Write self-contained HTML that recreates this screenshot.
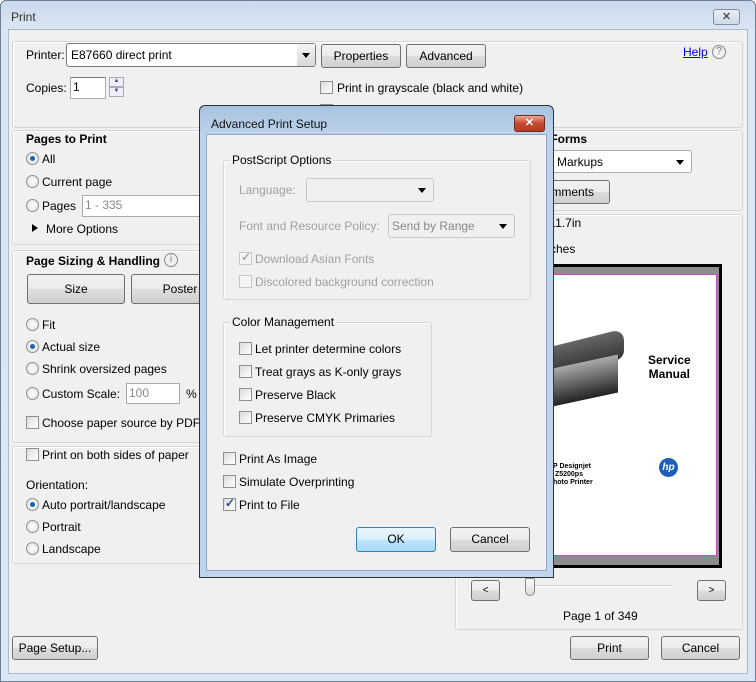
<!DOCTYPE html>
<html><head><style>
*{box-sizing:border-box;margin:0;padding:0}
body{width:756px;height:682px;overflow:hidden;background:#fff;font-family:"Liberation Sans",sans-serif;font-size:12px;color:#000;position:relative}
.a{position:absolute}
.win{left:0;top:0;width:756px;height:682px;background:linear-gradient(#c9d9ec,#dbe6f3 30px,#dce7f3);border:1px solid #6d7f95;border-radius:6px 6px 0 0}
.client{left:8px;top:29px;width:740px;height:645px;background:#f0f0f0;border:1px solid #a9b9cc}
.panel{position:absolute;border:1px solid #d6d6d6;border-radius:3px;box-shadow:inset 1px 1px 0 #fff}
.btn{position:absolute;border:1px solid #707070;border-radius:3px;background:linear-gradient(#f2f2f2,#ebebeb 50%,#dddddd 51%,#cfcfcf);text-align:center;font-size:12px}
.rb{position:absolute;width:13px;height:13px;border-radius:50%;border:1px solid #8e8f8f;background:radial-gradient(#fff,#dcdcdc)}
.rb.on::after{content:"";position:absolute;left:3px;top:3px;width:5px;height:5px;border-radius:50%;background:#1b65b0}
.cb{position:absolute;width:13px;height:13px;border:1px solid #8e8f8f;background:linear-gradient(135deg,#dcdcdc,#fff)}
.cb.on::after{content:"✓";position:absolute;left:1px;top:-3px;font-size:12px;color:#2a4e93;font-weight:bold}
.cb.dis{border-color:#c8c8c8;background:#f4f4f4}
.cb.dis.on::after{color:#aaa}
.t{position:absolute;white-space:nowrap}
.b{font-weight:bold}
.g{color:#a0a0a0}
.inp{position:absolute;background:#fff;border:1px solid #abadb3;border-top-color:#7a7a7a}
.dd{position:absolute;border:1px solid #acacac;border-radius:3px;background:#fff}
.dd::after{content:"";position:absolute;right:7px;top:50%;margin-top:-2px;border:4px solid transparent;border-top:5px solid #000;border-bottom:0}
</style></head><body>
<div class="a win"></div>
<div class="t" style="left:11px;top:10px;color:#333;font-size:12px">Print</div>
<div class="a" style="left:713px;top:9px;width:27px;height:16px;border:1px solid #7d8fa5;border-radius:3px;background:linear-gradient(#e6edf5,#cfdbe9);text-align:center;font-size:11px;line-height:14px;color:#555;font-weight:bold">✕</div>
<div class="a client"></div>

<div class="panel" style="left:12px;top:41px;width:731px;height:87px"></div>
<div class="t" style="left:26px;top:48px">Printer:</div>
<div class="dd" style="left:66px;top:43px;width:250px;height:24px;border-color:#7a7a7a"></div>
<div class="t" style="left:71px;top:48px">E87660 direct print</div>
<div class="a" style="left:297px;top:44px;width:18px;height:22px;background:linear-gradient(#f4f4f4,#d8d8d8)"></div>
<div class="a" style="left:302px;top:53px;border:4px solid transparent;border-top:5px solid #000"></div>
<div class="btn" style="left:321px;top:44px;width:80px;height:24px;line-height:22px">Properties</div>
<div class="btn" style="left:406px;top:44px;width:80px;height:24px;line-height:22px">Advanced</div>
<div class="t" style="left:683px;top:45px;color:#0000ee;text-decoration:underline">Help</div>
<div class="a" style="left:712px;top:45px;width:14px;height:14px;border:1px solid #888;border-radius:50%;font-size:10px;line-height:12px;text-align:center;color:#777">?</div>
<div class="t" style="left:26px;top:81px">Copies:</div>
<div class="inp" style="left:70px;top:77px;width:36px;height:22px"></div>
<div class="t" style="left:73px;top:80px">1</div>
<div class="a" style="left:109px;top:77px;width:15px;height:10px;border:1px solid #aaa;background:#eef;font-size:6px;text-align:center;color:#446">▲</div>
<div class="a" style="left:109px;top:87px;width:15px;height:10px;border:1px solid #aaa;background:#eef;font-size:6px;text-align:center;color:#446">▼</div>
<div class="cb" style="left:320px;top:81px"></div>
<div class="t" style="left:337px;top:81px">Print in grayscale (black and white)</div>
<div class="cb" style="left:320px;top:104px"></div>

<div class="panel" style="left:12px;top:130px;width:440px;height:115px"></div>
<div class="t b" style="left:26px;top:132px">Pages to Print</div>
<div class="rb on" style="left:26px;top:152px"></div><div class="t" style="left:42px;top:152px">All</div>
<div class="rb" style="left:26px;top:175px"></div><div class="t" style="left:42px;top:175px">Current page</div>
<div class="rb" style="left:26px;top:199px"></div><div class="t" style="left:42px;top:199px">Pages</div>
<div class="inp" style="left:82px;top:195px;width:130px;height:22px;border-color:#aaa"></div>
<div class="t g" style="left:85px;top:198px;color:#888">1 - 335</div>
<div class="a" style="left:32px;top:224px;border:4px solid transparent;border-left:6px solid #000;border-right:0"></div>
<div class="t" style="left:46px;top:222px">More Options</div>

<div class="panel" style="left:12px;top:250px;width:440px;height:193px"></div>
<div class="t b" style="left:26px;top:254px">Page Sizing &amp; Handling</div>
<div class="a" style="left:164px;top:253px;width:14px;height:14px;border:1px solid #888;border-radius:50%;font-size:10px;line-height:12px;text-align:center;color:#777">i</div>
<div class="btn" style="left:27px;top:274px;width:98px;height:30px;line-height:28px">Size</div>
<div class="btn" style="left:131px;top:274px;width:98px;height:30px;line-height:28px">Poster</div>
<div class="rb" style="left:26px;top:318px"></div><div class="t" style="left:42px;top:318px">Fit</div>
<div class="rb on" style="left:26px;top:340px"></div><div class="t" style="left:42px;top:340px">Actual size</div>
<div class="rb" style="left:26px;top:362px"></div><div class="t" style="left:42px;top:362px">Shrink oversized pages</div>
<div class="rb" style="left:26px;top:387px"></div><div class="t" style="left:42px;top:387px">Custom Scale:</div>
<div class="inp" style="left:126px;top:383px;width:54px;height:21px;border-color:#aaa"></div>
<div class="t" style="left:129px;top:386px;color:#888">100</div>
<div class="t" style="left:186px;top:387px">%</div>
<div class="cb" style="left:26px;top:416px"></div><div class="t" style="left:42px;top:416px">Choose paper source by PDF page size</div>

<div class="panel" style="left:12px;top:446px;width:440px;height:118px"></div>
<div class="cb" style="left:26px;top:448px"></div><div class="t" style="left:42px;top:448px">Print on both sides of paper</div>
<div class="t" style="left:26px;top:478px">Orientation:</div>
<div class="rb on" style="left:26px;top:498px"></div><div class="t" style="left:42px;top:498px">Auto portrait/landscape</div>
<div class="rb" style="left:26px;top:520px"></div><div class="t" style="left:42px;top:520px">Portrait</div>
<div class="rb" style="left:26px;top:542px"></div><div class="t" style="left:42px;top:542px">Landscape</div>

<div class="panel" style="left:455px;top:130px;width:288px;height:81px"></div>
<div class="t b" style="left:473px;top:132px">Comments &amp; Forms</div>
<div class="dd" style="left:480px;top:150px;width:212px;height:23px"></div>
<div class="t" style="left:557px;top:155px">Markups</div>
<div class="btn" style="left:480px;top:180px;width:130px;height:24px;line-height:22px;padding-left:40px">Comments</div>
<div class="panel" style="left:455px;top:214px;width:288px;height:416px"></div>
<div class="t" style="left:520px;top:216px">8.3 x 11.7in</div>
<div class="t" style="left:540px;top:242px">Inches</div>
<div class="a" style="left:470px;top:264px;width:252px;height:304px;border:3px solid #000;background:#8c8c8c"></div>
<div class="a" style="left:473px;top:274px;width:244px;height:282px;background:#fff;border:1px solid #c050c0"></div>
<div class="a" style="left:548px;top:338px;width:76px;height:30px;background:linear-gradient(#666,#333);border-radius:0 12px 8px 0;transform:skewY(-14deg)"></div>
<div class="a" style="left:548px;top:362px;width:70px;height:38px;background:linear-gradient(#aaa,#222);transform:skewY(-12deg)"></div>
<div class="t b" style="left:648px;top:353px;font-size:12px;line-height:14px;text-align:center">Service<br>Manual</div>
<div class="a" style="left:659px;top:458px;width:19px;height:19px;border-radius:50%;background:#1d5fb8;color:#fff;font-size:10px;font-style:italic;font-weight:bold;text-align:center;line-height:19px">hp</div>
<div class="t b" style="left:553px;top:463px;font-size:7px;line-height:8px">P Designjet<br>&nbsp;Z5200ps<br>hoto Printer</div>
<div class="btn" style="left:471px;top:580px;width:29px;height:21px;line-height:19px;font-size:10px">&lt;</div>
<div class="a" style="left:530px;top:585px;width:142px;height:2px;background:#d0d0d0;border-bottom:1px solid #fff"></div>
<div class="a" style="left:525px;top:578px;width:10px;height:18px;border:1px solid #888;border-radius:2px 2px 5px 5px;background:linear-gradient(#fafafa,#ddd)"></div>
<div class="btn" style="left:697px;top:580px;width:29px;height:21px;line-height:19px;font-size:10px">&gt;</div>
<div class="t" style="left:563px;top:609px">Page 1 of 349</div>

<div class="btn" style="left:570px;top:636px;width:79px;height:24px;line-height:22px">Print</div>
<div class="btn" style="left:661px;top:636px;width:79px;height:24px;line-height:22px">Cancel</div>
<div class="btn" style="left:12px;top:636px;width:86px;height:24px;line-height:22px">Page Setup...</div>

<div class="a" style="left:199px;top:105px;width:355px;height:473px;border:1px solid #333;border-radius:6px 6px 0 0;background:linear-gradient(#a7c2e0,#bed3ea 30px,#c0d5ec);"></div>
<div class="t" style="left:211px;top:117px;color:#111">Advanced Print Setup</div>
<div class="a" style="left:514px;top:115px;width:31px;height:17px;border:1px solid #6b2b1f;border-radius:3px;background:linear-gradient(#e9a99c,#c9462c 50%,#b83a22);color:#fff;font-size:11px;font-weight:bold;text-align:center;line-height:15px">✕</div>
<div class="a" style="left:206px;top:134px;width:341px;height:437px;background:#f0f0f0;border:1px solid #8fa7c4"></div>
<div class="panel" style="left:223px;top:160px;width:308px;height:140px"></div>
<div class="t" style="left:230px;top:153px;background:#f0f0f0;padding:0 2px">PostScript Options</div>
<div class="t g" style="left:239px;top:183px">Language:</div>
<div class="dd" style="left:306px;top:178px;width:128px;height:24px;border-color:#c8c8c8;background:#f0f0f0"></div>
<div class="t g" style="left:239px;top:219px">Font and Resource Policy:</div>
<div class="dd" style="left:388px;top:214px;width:127px;height:24px;border-color:#c8c8c8;background:#f0f0f0"></div>
<div class="t g" style="left:392px;top:219px;color:#888">Send by Range</div>
<div class="cb dis on" style="left:239px;top:252px"></div><div class="t g" style="left:255px;top:252px">Download Asian Fonts</div>
<div class="cb dis" style="left:239px;top:275px"></div><div class="t g" style="left:255px;top:275px">Discolored background correction</div>
<div class="panel" style="left:223px;top:322px;width:209px;height:115px"></div>
<div class="t" style="left:230px;top:315px;background:#f0f0f0;padding:0 2px">Color Management</div>
<div class="cb" style="left:239px;top:342px"></div><div class="t" style="left:255px;top:342px">Let printer determine colors</div>
<div class="cb" style="left:239px;top:365px"></div><div class="t" style="left:255px;top:365px">Treat grays as K-only grays</div>
<div class="cb" style="left:239px;top:388px"></div><div class="t" style="left:255px;top:388px">Preserve Black</div>
<div class="cb" style="left:239px;top:411px"></div><div class="t" style="left:255px;top:411px">Preserve CMYK Primaries</div>
<div class="cb" style="left:223px;top:452px"></div><div class="t" style="left:239px;top:452px">Print As Image</div>
<div class="cb" style="left:223px;top:475px"></div><div class="t" style="left:239px;top:475px">Simulate Overprinting</div>
<div class="cb on" style="left:223px;top:498px"></div><div class="t" style="left:239px;top:498px">Print to File</div>
<div class="btn" style="left:356px;top:527px;width:80px;height:25px;line-height:23px;border-color:#3c7fb1;background:linear-gradient(#eaf6fd,#d9f0fc 50%,#bee6fd 51%,#a7d9f5)">OK</div>
<div class="btn" style="left:450px;top:527px;width:80px;height:25px;line-height:23px">Cancel</div>
</body></html>
